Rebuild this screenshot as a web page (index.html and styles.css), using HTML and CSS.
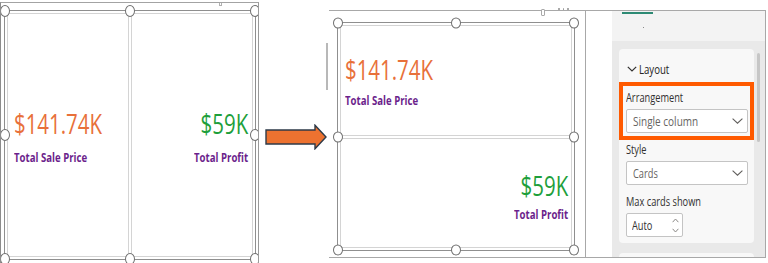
FILE: index.html
```html
<!DOCTYPE html>
<html>
<head>
<meta charset="utf-8">
<link rel="stylesheet" href="styles.css">
</head>
<body>
<div class="shot">
  <div class="before">
    <span class="tick"></span>
    <div class="frame frame-h">
      <div class="card card-l pad-big">
        <span class="val orange">$141.74K</span>
        <span class="lbl gap-9">Total Sale Price</span>
      </div>
      <div class="card card-r pad-big">
        <span class="val green">$59K</span>
        <span class="lbl gap-9">Total Profit</span>
      </div>
      <span class="hd tl"></span><span class="hd tc"></span><span class="hd tr"></span>
      <span class="hd ml"></span><span class="hd mr"></span>
      <span class="hd bl"></span><span class="hd bc"></span><span class="hd br"></span>
    </div>
  </div>

  <div class="arrow-col">
    <svg class="arrow" width="62" height="26" viewBox="0 0 62 26">
      <path d="M1 6 H50 V1.2 L61 13 L50 24.8 V20 H1 Z" fill="#ed7230" stroke="#2e3a48" stroke-width="1.4" stroke-linejoin="miter"/>
    </svg>
  </div>

  <div class="edge-col"><span class="edge-bar"></span></div>

  <div class="after">
    <div class="canvas">
      <span class="pin"></span>
      <span class="dots"><i></i><i></i><i></i></span>
      <div class="frame frame-v">
        <div class="card card-l pad-r1">
          <span class="val orange">$141.74K</span>
          <span class="lbl gap-6">Total Sale Price</span>
        </div>
        <div class="card card-r2 pad-r2">
          <span class="val green">$59K</span>
          <span class="lbl gap-4">Total Profit</span>
        </div>
        <span class="hd sm tl"></span><span class="hd sm tc"></span><span class="hd sm tr"></span>
        <span class="hd sm ml"></span><span class="hd sm mr"></span>
        <span class="hd sm bl"></span><span class="hd sm bc"></span><span class="hd sm br"></span>
      </div>
    </div>
    <div class="spacer"></div>
    <div class="pane">
      <div class="pane-top">
        <span class="tab-line"></span>
        <span class="tab-dot"></span>
      </div>
      <div class="pane-body">
        <div class="pane-col">
          <div class="fcard">
            <div class="fhead">
              <svg width="10" height="6" viewBox="0 0 10 6"><path d="M0.8 0.8 L5 5 L9.2 0.8" fill="none" stroke="#323130" stroke-width="1.2"/></svg>
              <span class="sq">Layout</span>
            </div>
            <div class="hl">
              <div class="flbl">Arrangement</div>
              <div class="dd">
                <span class="sq wide">Single column</span>
                <svg width="11" height="6" viewBox="0 0 11 6"><path d="M0.6 0.6 L5.5 5.2 L10.4 0.6" fill="none" stroke="#605e5c" stroke-width="1.1"/></svg>
              </div>
            </div>
            <div class="sect">
              <div class="flbl mt-2">Style</div>
              <div class="dd">
                <span class="sq">Cards</span>
                <svg width="11" height="6" viewBox="0 0 11 6"><path d="M0.6 0.6 L5.5 5.2 L10.4 0.6" fill="none" stroke="#605e5c" stroke-width="1.1"/></svg>
              </div>
              <div class="flbl mt-9">Max cards shown</div>
              <div class="spin">
                <span class="sq dark">Auto</span>
                <span class="spin-arrows">
                  <svg width="7" height="5" viewBox="0 0 7 5"><path d="M0.6 4.2 L3.5 1 L6.4 4.2" fill="none" stroke="#8a8886" stroke-width="1"/></svg>
                  <svg width="7" height="5" viewBox="0 0 7 5"><path d="M0.6 0.8 L3.5 4 L6.4 0.8" fill="none" stroke="#8a8886" stroke-width="1"/></svg>
                </span>
              </div>
            </div>
          </div>
          <div class="fcard-next"></div>
        </div>
        <span class="scroll"></span>
      </div>
    </div>
  </div>
</div>
</body>
</html>
```

FILE: styles.css
```css
* { box-sizing: border-box; }
html, body { margin: 0; padding: 0; background: #ffffff; }
body {
  width: 768px;
  height: 263px;
  overflow: hidden;
  font-family: "Open Sans", "Noto Sans", sans-serif;
}
.shot { display: flex; align-items: flex-start; height: 263px; }

/* ---------- left (before) ---------- */
.before {
  position: relative;
  flex: none;
  width: 259px;
  height: 263px;
  margin-top: 2px;
  border-top: 1px solid #a3a3a3;
  border-left: 1px solid #8c8c8c;
  border-right: 1px solid #9a9a9a;
  padding: 7px 0 0 3px;
  overflow: hidden;
}
.tick {
  position: absolute;
  left: 218px;
  top: -1px;
  width: 3px;
  height: 4px;
  border: 1px solid #b0b0b0;
  border-top: none;
}

.frame {
  position: relative;
  border: 1px solid #8f8f8f;
  padding: 2px;
  display: grid;
  gap: 2px;
}
.frame-h {
  width: 252px;
  height: 250px;
  grid-template-columns: 1fr 1fr;
}
.frame-v {
  width: 238px;
  height: 229px;
  grid-template-rows: 1fr 1fr;
}

.card {
  border: 1px solid #d4d4d4;
  display: flex;
  flex-direction: column;
  min-width: 0;
  min-height: 0;
}
.card-l { align-items: flex-start; padding-left: 6px; }
.card-r { align-items: flex-end; padding-right: 4px; }
.card-r2 { align-items: flex-end; padding-right: 3px; }
.frame-v .card-l { padding-left: 4px; }
.pad-big { padding-top: 93px; }
.pad-r1 { padding-top: 27px; }
.pad-r2 { padding-top: 30px; }

.val {
  display: inline-block;
  font-size: 28px;
  line-height: 32px;
  font-weight: 500;
  white-space: nowrap;
  transform: scaleX(0.73);
  transform-origin: left center;
}
.lbl {
  display: inline-block;
  font-size: 13px;
  line-height: 18px;
  font-weight: 700;
  color: #6c1f8c;
  white-space: nowrap;
  transform: scaleX(0.74);
  transform-origin: left center;
}
.card-r .val, .card-r .lbl, .card-r2 .val, .card-r2 .lbl { transform-origin: right center; }
.gap-9 { margin-top: 9px; }
.gap-6 { margin-top: 6px; }
.gap-4 { margin-top: 4px; }
.orange { color: #e8703a; }
.green { color: #1e9f3b; }

/* selection handles (overlay) */
.hd {
  position: absolute;
  width: 10px;
  height: 12px;
  border: 1.5px solid #6f6f6f;
  border-radius: 50%;
  background: #ffffff;
  transform: translate(-50%, -50%);
}
.hd.sm { width: 10px; height: 11px; }
.tl { left: -0.5px; top: 0; }
.tc { left: 50%; top: 0; }
.tr { left: 100%; top: 0; }
.ml { left: -0.5px; top: 50%; }
.mr { left: 100%; top: 50%; }
.bl { left: -0.5px; top: 100%; }
.bc { left: 50%; top: 100%; }
.br { left: 100%; top: 100%; }

/* ---------- arrow ---------- */
.arrow-col { flex: none; width: 67px; height: 263px; padding: 124px 0 0 6px; }
.arrow { display: block; }
.edge-col { flex: none; width: 3px; height: 263px; padding-top: 43px; }
.edge-bar { display: block; width: 2px; height: 47px; background: #b8b8b8; }

/* ---------- right (after) ---------- */
.after {
  flex: none;
  width: 437px;
  height: 248px;
  margin-top: 10px;
  border-top: 1px solid #a8a8a8;
  border-right: 1px solid #a8a8a8;
  border-bottom: 1px solid #a8a8a8;
  display: flex;
}
.canvas {
  position: relative;
  flex: none;
  width: 257px;
  border-right: 1px solid #a8a8a8;
  padding: 11px 0 0 8px;
}
.pin {
  position: absolute;
  left: 212px;
  top: -2px;
  width: 4px;
  height: 7px;
  border: 1px solid #a9a9a9;
  border-radius: 1px;
  background: #fff;
}
.dots {
  position: absolute;
  left: 229px;
  top: -3px;
  display: flex;
  gap: 3px;
}
.dots i { display: block; width: 1.5px; height: 1.5px; background: #9a9a9a; border-radius: 50%; }

.spacer { flex: none; width: 26px; }

.pane {
  flex: none;
  width: 153px;
  display: flex;
  flex-direction: column;
  overflow: hidden;
}
.pane-top {
  position: relative;
  flex: none;
  height: 30px;
  background: #f3f3f3;
  padding-left: 10px;
}
.tab-line { display: block; width: 31px; height: 2px; background: #2d8a74; margin-top: 1px; }
.tab-dot {
  position: absolute;
  left: 31px;
  top: 16px;
  width: 1px;
  height: 1px;
  background: #8a8a8a;
}
.pane-body {
  flex: 1;
  background: #e9e9e9;
  display: flex;
  gap: 3px;
  padding: 8px 0 0 7px;
  overflow: hidden;
}
.pane-col { flex: none; width: 135px; display: flex; flex-direction: column; }
.fcard {
  flex: none;
  height: 194px;
  background: #f8f8f8;
  border-radius: 4px;
}
.fcard-next {
  flex: none;
  height: 20px;
  margin-top: 10px;
  background: #f8f8f8;
  border-radius: 4px 4px 0 0;
}
.scroll {
  display: block;
  flex: none;
  width: 3px;
  height: 89px;
  margin-top: 4px;
  background: #c6c6c6;
  border-radius: 2px;
}

.fhead {
  height: 33px;
  padding: 11px 0 4px 8px;
  display: flex;
  align-items: center;
  gap: 2px;
  font-size: 13px;
  line-height: 18px;
  color: #252423;
}
.sq {
  display: inline-block;
  white-space: nowrap;
  transform: scaleX(0.74);
  transform-origin: left center;
}
.sq.wide { transform: scaleX(0.8); }
.hl {
  border: 4px solid #ff5a00;
  padding: 4px 2px 3px 3px;
}
.flbl {
  font-size: 12.5px;
  line-height: 16px;
  color: #323130;
  white-space: nowrap;
  transform: scaleX(0.74);
  transform-origin: left center;
}
.mt-2 { margin-top: 2px; }
.mt-9 { margin-top: 9px; }
.sect { padding-left: 7px; }
.dd {
  margin-top: 3px;
  width: 122px;
  height: 24px;
  background: #ffffff;
  border: 1px solid #c4c4c4;
  border-radius: 2px;
  display: flex;
  align-items: center;
  justify-content: space-between;
  padding: 0 4px 0 6px;
  font-size: 12.5px;
  color: #66645f;
}
.dd svg { display: block; }
.spin {
  margin-top: 3px;
  width: 57px;
  height: 24px;
  background: #ffffff;
  border: 1px solid #c4c4c4;
  border-radius: 2px;
  display: flex;
  align-items: center;
  justify-content: space-between;
  padding: 0 3px 0 5px;
  font-size: 12.5px;
}
.dark { color: #323130; }
.spin-arrows { display: flex; flex-direction: column; gap: 5px; }
.spin-arrows svg { display: block; }
```
